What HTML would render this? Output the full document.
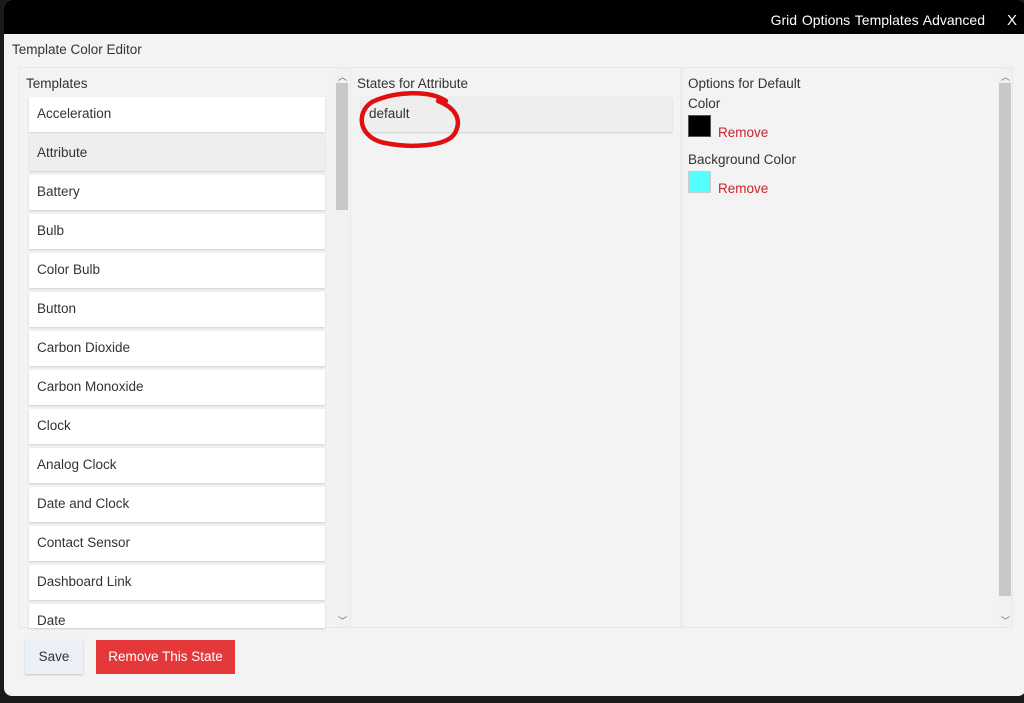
<!DOCTYPE html>
<html><head><meta charset="utf-8"><style>
*{box-sizing:border-box;margin:0;padding:0}
body{width:1024px;height:703px;background:#1a1a1a;font-family:"Liberation Sans",Arial,sans-serif;color:#333;overflow:hidden;position:relative}
.dlg{position:absolute;left:4px;top:0;width:1022px;height:696px;background:#f3f3f3;border-radius:8px;overflow:hidden}
.hdr{height:34px;background:#000;color:#fff;font-size:14px;position:relative}
.hdr .nav{position:absolute;right:41px;top:12px;word-spacing:1px}
.hdr .x{position:absolute;right:9px;top:12px;font-size:15px}
.title{position:absolute;left:8px;top:42px;font-size:13.5px}
.panel{position:absolute;top:67px;height:561px;background:#f3f3f3;border:1px solid #e8e8e8}
.ph{position:absolute;font-size:13.5px;top:8px}
.item{position:absolute;height:35px;background:#fff;font-size:13.5px;padding:9px 8px;box-shadow:0 1px 2px rgba(0,0,0,.15)}
.sb{position:absolute;top:0;width:14px;height:100%;background:#f1f1f1}
.thumb{position:absolute;left:1px;width:12px;background:#c8c8c8}
.arr{position:absolute;left:3px;font-size:9px;color:#666}
.rm{color:#c8232c;font-size:13.5px}
</style></head><body>
<div class="dlg">
<div class="hdr"><span class="nav">Grid Options Templates Advanced</span><span class="x">X</span></div>
<div class="title">Template Color Editor</div>
<div class="panel" style="left:15px;width:330px">
 <div class="ph" style="left:6px">Templates</div>
 <div class="item" style="left:9px;top:29px;width:296px">Acceleration</div>
 <div class="item" style="left:9px;top:68px;width:296px;background:#eeeeee">Attribute</div>
 <div class="item" style="left:9px;top:107px;width:296px">Battery</div>
 <div class="item" style="left:9px;top:146px;width:296px">Bulb</div>
 <div class="item" style="left:9px;top:185px;width:296px">Color Bulb</div>
 <div class="item" style="left:9px;top:224px;width:296px">Button</div>
 <div class="item" style="left:9px;top:263px;width:296px">Carbon Dioxide</div>
 <div class="item" style="left:9px;top:302px;width:296px">Carbon Monoxide</div>
 <div class="item" style="left:9px;top:341px;width:296px">Clock</div>
 <div class="item" style="left:9px;top:380px;width:296px">Analog Clock</div>
 <div class="item" style="left:9px;top:419px;width:296px">Date and Clock</div>
 <div class="item" style="left:9px;top:458px;width:296px">Contact Sensor</div>
 <div class="item" style="left:9px;top:497px;width:296px">Dashboard Link</div>
 <div class="item" style="left:9px;top:536px;width:296px;height:24px">Date</div>
 <div class="sb" style="left:315px"><div class="thumb" style="top:15px;height:127px"></div><span class="arr" style="top:2px">︿</span><span class="arr" style="top:546px">﹀</span></div>
</div>
<div class="panel" style="left:346px;width:331px">
 <div class="ph" style="left:6px">States for Attribute</div>
 <div class="item" style="left:10px;top:29px;width:311px;background:#eeeeee">default</div>
</div>
<div class="panel" style="left:678px;width:331px">
 <div class="ph" style="left:5px">Options for Default</div>
 <div style="position:absolute;left:5px;top:28px;font-size:13.5px">Color</div>
 <div style="position:absolute;left:5px;top:47px;width:23px;height:22px;background:#000;border:1px solid #555"></div>
 <div class="rm" style="position:absolute;left:35px;top:57px">Remove</div>
 <div style="position:absolute;left:5px;top:84px;font-size:13.5px">Background Color</div>
 <div style="position:absolute;left:5px;top:103px;width:23px;height:22px;background:#55ffff;border:1px solid #ccc"></div>
 <div class="rm" style="position:absolute;left:35px;top:113px">Remove</div>
 <div class="sb" style="left:315px"><div class="thumb" style="top:15px;height:513px"></div><span class="arr" style="top:2px">︿</span><span class="arr" style="top:546px">﹀</span></div>
</div>
<div style="position:absolute;left:21px;top:640px;width:58px;height:34px;background:#eaf0f6;font-size:13.5px;text-align:center;line-height:34px;box-shadow:0 1px 2px rgba(0,0,0,.2)">Save</div>
<div style="position:absolute;left:92px;top:640px;width:139px;height:34px;background:#e5383b;color:#fff;font-size:13.5px;text-align:center;line-height:34px">Remove This State</div>
</div>
<svg style="position:absolute;left:0;top:0" width="1024" height="703"><path d="M446 101 C430 90 395 91 372 102 C355 113 359 138 385 143 C410 148 447 147 455 133 C462 120 456 108 438 101" fill="none" stroke="#e01010" stroke-width="4.5" stroke-linecap="round"/></svg>
</body></html>
